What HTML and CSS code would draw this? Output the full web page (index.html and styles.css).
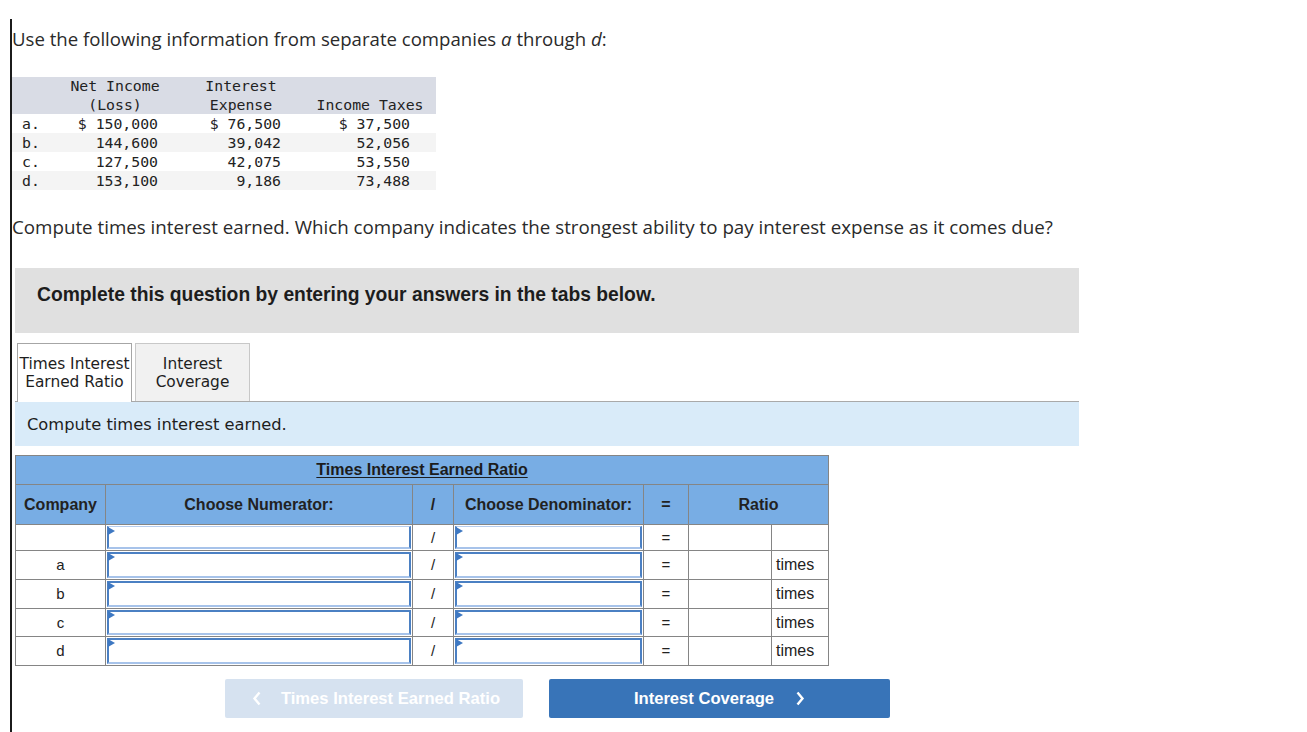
FILE: index.html
```html
<!DOCTYPE html>
<html>
<head>
<meta charset="utf-8">
<link rel="stylesheet" href="styles.css">
</head>
<body>
<div class="page">
  <p class="intro">Use the following information from separate companies <i>a</i> through <i>d</i>:</p>

  <table class="data">
    <colgroup><col class="c0"><col class="c1"><col class="c2"><col class="c3"></colgroup>
    <thead>
      <tr>
        <th></th>
        <th class="h1">Net Income<br>(Loss)</th>
        <th class="h2">Interest<br>Expense</th>
        <th class="h3">Income Taxes</th>
      </tr>
    </thead>
    <tbody>
      <tr><td class="lbl">a.</td><td class="v1">$ 150,000</td><td class="v2">$ 76,500</td><td class="v3">$ 37,500</td></tr>
      <tr class="alt"><td class="lbl">b.</td><td class="v1">144,600</td><td class="v2">39,042</td><td class="v3">52,056</td></tr>
      <tr><td class="lbl">c.</td><td class="v1">127,500</td><td class="v2">42,075</td><td class="v3">53,550</td></tr>
      <tr class="alt"><td class="lbl">d.</td><td class="v1">153,100</td><td class="v2">9,186</td><td class="v3">73,488</td></tr>
    </tbody>
  </table>

  <p class="question">Compute times interest earned. Which company indicates the strongest ability to pay interest expense as it comes due?</p>

  <div class="instructions">Complete this question by entering your answers in the tabs below.</div>

  <div class="tabs">
    <div class="tab active">Times Interest<br>Earned Ratio</div>
    <div class="tab">Interest<br>Coverage</div>
  </div>
  <div class="tabbar">Compute times interest earned.</div>

  <table class="work">
    <colgroup>
      <col class="w-co"><col class="w-num"><col class="w-sl"><col class="w-den"><col class="w-eq"><col class="w-rin"><col class="w-rt">
    </colgroup>
    <tr class="title-row"><th colspan="7"><span>Times Interest Earned Ratio</span></th></tr>
    <tr class="head-row">
      <th>Company</th>
      <th>Choose Numerator:</th>
      <th>/</th>
      <th>Choose Denominator:</th>
      <th>=</th>
      <th colspan="2">Ratio</th>
    </tr>
    <tr class="r0">
      <td class="co"></td>
      <td class="in"><div class="box first"></div><span class="tri"></span></td>
      <td class="op">/</td>
      <td class="in"><div class="box first"></div><span class="tri"></span></td>
      <td class="op">=</td>
      <td class="rin"></td>
      <td class="rt"></td>
    </tr>
    <tr class="r29">
      <td class="co">a</td>
      <td class="in"><div class="box"></div><span class="tri"></span></td>
      <td class="op">/</td>
      <td class="in"><div class="box"></div><span class="tri"></span></td>
      <td class="op">=</td>
      <td class="rin"></td>
      <td class="rt">times</td>
    </tr>
    <tr class="r29">
      <td class="co">b</td>
      <td class="in"><div class="box"></div><span class="tri"></span></td>
      <td class="op">/</td>
      <td class="in"><div class="box"></div><span class="tri"></span></td>
      <td class="op">=</td>
      <td class="rin"></td>
      <td class="rt">times</td>
    </tr>
    <tr class="r28">
      <td class="co">c</td>
      <td class="in"><div class="box"></div><span class="tri"></span></td>
      <td class="op">/</td>
      <td class="in"><div class="box"></div><span class="tri"></span></td>
      <td class="op">=</td>
      <td class="rin"></td>
      <td class="rt">times</td>
    </tr>
    <tr class="r29">
      <td class="co">d</td>
      <td class="in"><div class="box"></div><span class="tri"></span></td>
      <td class="op">/</td>
      <td class="in"><div class="box"></div><span class="tri"></span></td>
      <td class="op">=</td>
      <td class="rin"></td>
      <td class="rt">times</td>
    </tr>
  </table>

  <div class="nav">
    <button class="btn prev">
      <svg class="chev" width="10" height="15" viewBox="0 0 10 15"><path d="M7.5 1.5 L2.5 7.5 L7.5 13.5" fill="none" stroke="#ffffff" stroke-width="2.4"/></svg>
      <span>Times Interest Earned Ratio</span>
    </button>
    <button class="btn next">
      <span>Interest Coverage</span>
      <svg class="chev" width="10" height="15" viewBox="0 0 10 15"><path d="M2.5 1.5 L7.5 7.5 L2.5 13.5" fill="none" stroke="#ffffff" stroke-width="2.4"/></svg>
    </button>
  </div>
</div>
</body>
</html>
```

FILE: styles.css
```css
html, body {
  margin: 0;
  padding: 0;
  background: #ffffff;
  overflow: hidden;
}

.page {
  margin: 19px 0 0 10px;
  border-left: 2px solid #1b1b1b;
  min-height: 720px;
  padding-top: 9px;
  color: #222222;
  font-family: "Open Sans", "Liberation Sans", sans-serif;
}

.intro {
  margin: 0;
  font-size: 18.6px;
  line-height: 22px;
  color: #2a2a2a;
}

/* data table */
.data {
  margin-top: 27px;
  border-collapse: collapse;
  font-family: "DejaVu Sans Mono", "Liberation Mono", monospace;
  font-size: 14.8px;
  color: #222;
}
.data col.c0 { width: 48px; }
.data col.c1 { width: 110px; }
.data col.c2 { width: 130px; }
.data col.c3 { width: 136px; }
.data thead tr {
  background: #d9dce5;
}
.data th {
  font-weight: normal;
  line-height: 18.5px;
  height: 37px;
  padding: 0;
  vertical-align: bottom;
  text-align: center;
}
.data th.h2 { padding-left: 12px; }
.data th.h3 { padding-left: 4px; }
.data td {
  height: 19px;
  line-height: 19px;
  padding: 0;
  white-space: pre;
}
.data tr.alt { background: #f4f4f4; }
.data td.lbl { padding-left: 10px; }
.data td.v1 { text-align: right; padding-right: 12px; }
.data td.v2 { text-align: right; padding-right: 19px; }
.data td.v3 { text-align: right; padding-right: 26px; }

.question {
  margin: 26px 0 0 0;
  font-size: 18.75px;
  line-height: 22px;
  color: #2a2a2a;
}

.instructions {
  margin: 30px 0 0 3px;
  height: 65px;
  box-sizing: border-box;
  padding: 16px 0 0 22px;
  background: #e0e0e0;
  font-family: "Liberation Sans", Arial, sans-serif;
  font-weight: bold;
  font-size: 19.3px;
  line-height: 22px;
  color: #1d1d1d;
  width: 1064px;
}

/* tabs */
.tabs {
  margin: 10px 0 0 3px;
  width: 1064px;
  display: flex;
  gap: 3px;
  padding-left: 2px;
  box-sizing: border-box;
  border-bottom: 1px solid #a9a9a9;
}
.tab {
  width: 115px;
  height: 58px;
  box-sizing: border-box;
  border: 1px solid #c8c8c8;
  border-bottom: none;
  background: #f1f1f1;
  display: flex;
  align-items: center;
  justify-content: center;
  text-align: center;
  font-family: "DejaVu Sans", Verdana, sans-serif;
  font-size: 15.4px;
  line-height: 18px;
  color: #1e1e1e;
  white-space: nowrap;
}
.tab.active {
  background: #ffffff;
  border-color: #a6a6a6;
  margin-bottom: -1px;
  height: 59px;
  padding-bottom: 1px;
}

.tabbar {
  margin-left: 3px;
  width: 1064px;
  box-sizing: border-box;
  height: 44px;
  padding: 13px 0 0 12px;
  background: #d9ebf9;
  font-family: "DejaVu Sans", Verdana, sans-serif;
  font-size: 16.3px;
  line-height: 20px;
  color: #1e1e1e;
}

/* work table */
.work {
  margin: 9px 0 0 3px;
  border-collapse: collapse;
  width: 813px;
  table-layout: fixed;
  font-family: "Liberation Sans", Arial, sans-serif;
  font-size: 15px;
  color: #222;
}
.work col.w-co { width: 90px; }
.work col.w-num { width: 307px; }
.work col.w-sl { width: 41px; }
.work col.w-den { width: 190px; }
.work col.w-eq { width: 45px; }
.work col.w-rin { width: 83px; }
.work col.w-rt { width: 57px; }

.work th, .work td {
  border: 1px solid #858585;
  padding: 0;
  line-height: 18px;
}
.work .title-row th {
  background: #78ade4;
  height: 28px;
  font-size: 16px;
  font-weight: bold;
  text-align: center;
  vertical-align: middle;
}
.work .title-row th span {
  text-decoration: underline;
  text-underline-offset: 2px;
  color: #1c1c1c;
}
.work .head-row th {
  background: #78ade4;
  height: 39px;
  font-size: 16px;
  font-weight: bold;
  color: #222;
}
.work td {
  text-align: center;
  vertical-align: middle;
}
.work tr.r0 td { height: 25px; }
.work tr.r29 td { height: 28px; }
.work tr.r28 td { height: 27px; }
.work td.in {
  position: relative;
}
.work .box {
  margin: 1px;
  box-sizing: border-box;
  border: 2px solid #4b80c3;
  border-bottom-color: #a7c3ea;
  background: #ffffff;
}
.work tr.r0 .box { height: 23px; }
.work tr.r29 .box { height: 26px; }
.work tr.r28 .box { height: 25px; }
.work .box.first {
  border-top-color: #b6cdee;
  border-top-width: 1px;
}
.work .tri {
  position: absolute;
  left: 2px;
  top: 2px;
  width: 0;
  height: 0;
  border-top: 4px solid transparent;
  border-bottom: 4px solid transparent;
  border-left: 7px solid #3e78c2;
}
.work td.rt {
  text-align: left;
  padding-left: 4px;
  font-size: 16px;
}

/* nav buttons */
.nav {
  display: flex;
  gap: 26px;
  margin: 13px 0 0 213px;
}
.btn {
  height: 39px;
  border: none;
  border-radius: 2px;
  color: #ffffff;
  font-family: "Liberation Sans", Arial, sans-serif;
  font-weight: bold;
  font-size: 16.6px;
  display: flex;
  align-items: center;
  justify-content: center;
  padding: 0;
}
.btn.prev {
  width: 298px;
  background: #d6e2f0;
  gap: 19px;
  padding-left: 4px;
}
.btn.next {
  width: 341px;
  background: #3874b8;
  gap: 21px;
  padding-left: 0;
}
.chev { display: block; }
```
